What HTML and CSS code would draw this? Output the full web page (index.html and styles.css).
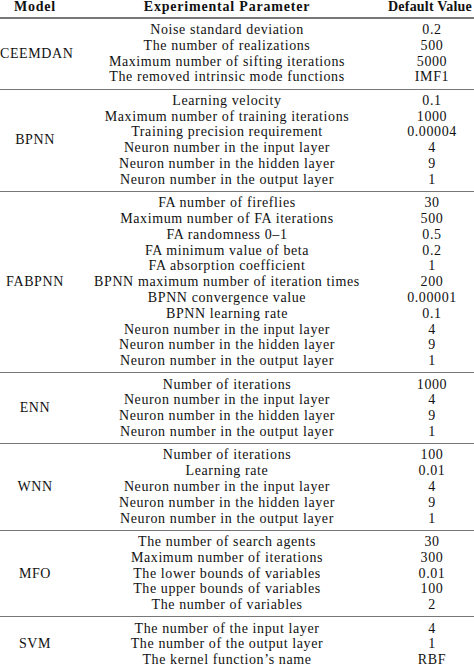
FILE: index.html
```html
<!DOCTYPE html>
<html>
<head>
<meta charset="utf-8">
<link rel="stylesheet" href="styles.css">
</head>
<body>
<div class="table">
  <div class="head">
    <div class="c1">Model</div>
    <div class="c2">Experimental Parameter</div>
    <div class="c3">Default Value</div>
  </div>

  <div class="section">
    <div class="model">CEEMDAN</div>
    <div class="params">
      <div>Noise standard deviation</div>
      <div>The number of realizations</div>
      <div>Maximum number of sifting iterations</div>
      <div>The removed intrinsic mode functions</div>
    </div>
    <div class="values">
      <div>0.2</div><div>500</div><div>5000</div><div>IMF1</div>
    </div>
  </div>

  <div class="section">
    <div class="model">BPNN</div>
    <div class="params">
      <div>Learning velocity</div>
      <div>Maximum number of training iterations</div>
      <div>Training precision requirement</div>
      <div>Neuron number in the input layer</div>
      <div>Neuron number in the hidden layer</div>
      <div>Neuron number in the output layer</div>
    </div>
    <div class="values">
      <div>0.1</div><div>1000</div><div>0.00004</div><div>4</div><div>9</div><div>1</div>
    </div>
  </div>

  <div class="section">
    <div class="model">FABPNN</div>
    <div class="params">
      <div>FA number of fireflies</div>
      <div>Maximum number of FA iterations</div>
      <div>FA randomness 0–1</div>
      <div>FA minimum value of beta</div>
      <div>FA absorption coefficient</div>
      <div>BPNN maximum number of iteration times</div>
      <div>BPNN convergence value</div>
      <div>BPNN learning rate</div>
      <div>Neuron number in the input layer</div>
      <div>Neuron number in the hidden layer</div>
      <div>Neuron number in the output layer</div>
    </div>
    <div class="values">
      <div>30</div><div>500</div><div>0.5</div><div>0.2</div><div>1</div><div>200</div><div>0.00001</div><div>0.1</div><div>4</div><div>9</div><div>1</div>
    </div>
  </div>

  <div class="section">
    <div class="model">ENN</div>
    <div class="params">
      <div>Number of iterations</div>
      <div>Neuron number in the input layer</div>
      <div>Neuron number in the hidden layer</div>
      <div>Neuron number in the output layer</div>
    </div>
    <div class="values">
      <div>1000</div><div>4</div><div>9</div><div>1</div>
    </div>
  </div>

  <div class="section">
    <div class="model">WNN</div>
    <div class="params">
      <div>Number of iterations</div>
      <div>Learning rate</div>
      <div>Neuron number in the input layer</div>
      <div>Neuron number in the hidden layer</div>
      <div>Neuron number in the output layer</div>
    </div>
    <div class="values">
      <div>100</div><div>0.01</div><div>4</div><div>9</div><div>1</div>
    </div>
  </div>

  <div class="section">
    <div class="model">MFO</div>
    <div class="params">
      <div>The number of search agents</div>
      <div>Maximum number of iterations</div>
      <div>The lower bounds of variables</div>
      <div>The upper bounds of variables</div>
      <div>The number of variables</div>
    </div>
    <div class="values">
      <div>30</div><div>300</div><div>0.01</div><div>100</div><div>2</div>
    </div>
  </div>

  <div class="section">
    <div class="model">SVM</div>
    <div class="params">
      <div>The number of the input layer</div>
      <div>The number of the output layer</div>
      <div>The kernel function’s name</div>
    </div>
    <div class="values">
      <div>4</div><div>1</div><div>RBF</div>
    </div>
  </div>
</div>
</body>
</html>
```
FILE: styles.css
```css
html, body {
  margin: 0;
  padding: 0;
  background: #ffffff;
  overflow: hidden;
}
body {
  font-family: "Liberation Serif", "DejaVu Serif", serif;
  font-size: 14px;
  line-height: 15.8px;
  letter-spacing: 0.6px;
  color: #111111;
}
.table {
  width: 480px;
  margin-top: -1px;
}
.head,
.section {
  display: grid;
  grid-template-columns: 70px 314px 96px;
  text-align: center;
}
.head {
  font-weight: bold;
  letter-spacing: 0.8px;
  padding-bottom: 2px;
  border-bottom: 2px solid #777777;
}
.head .c3 {
  letter-spacing: 0.2px;
  padding-right: 4px;
}
.section {
  padding: 3.3px 0;
  border-bottom: 1px solid #777777;
}
.model {
  align-self: center;
}
```
